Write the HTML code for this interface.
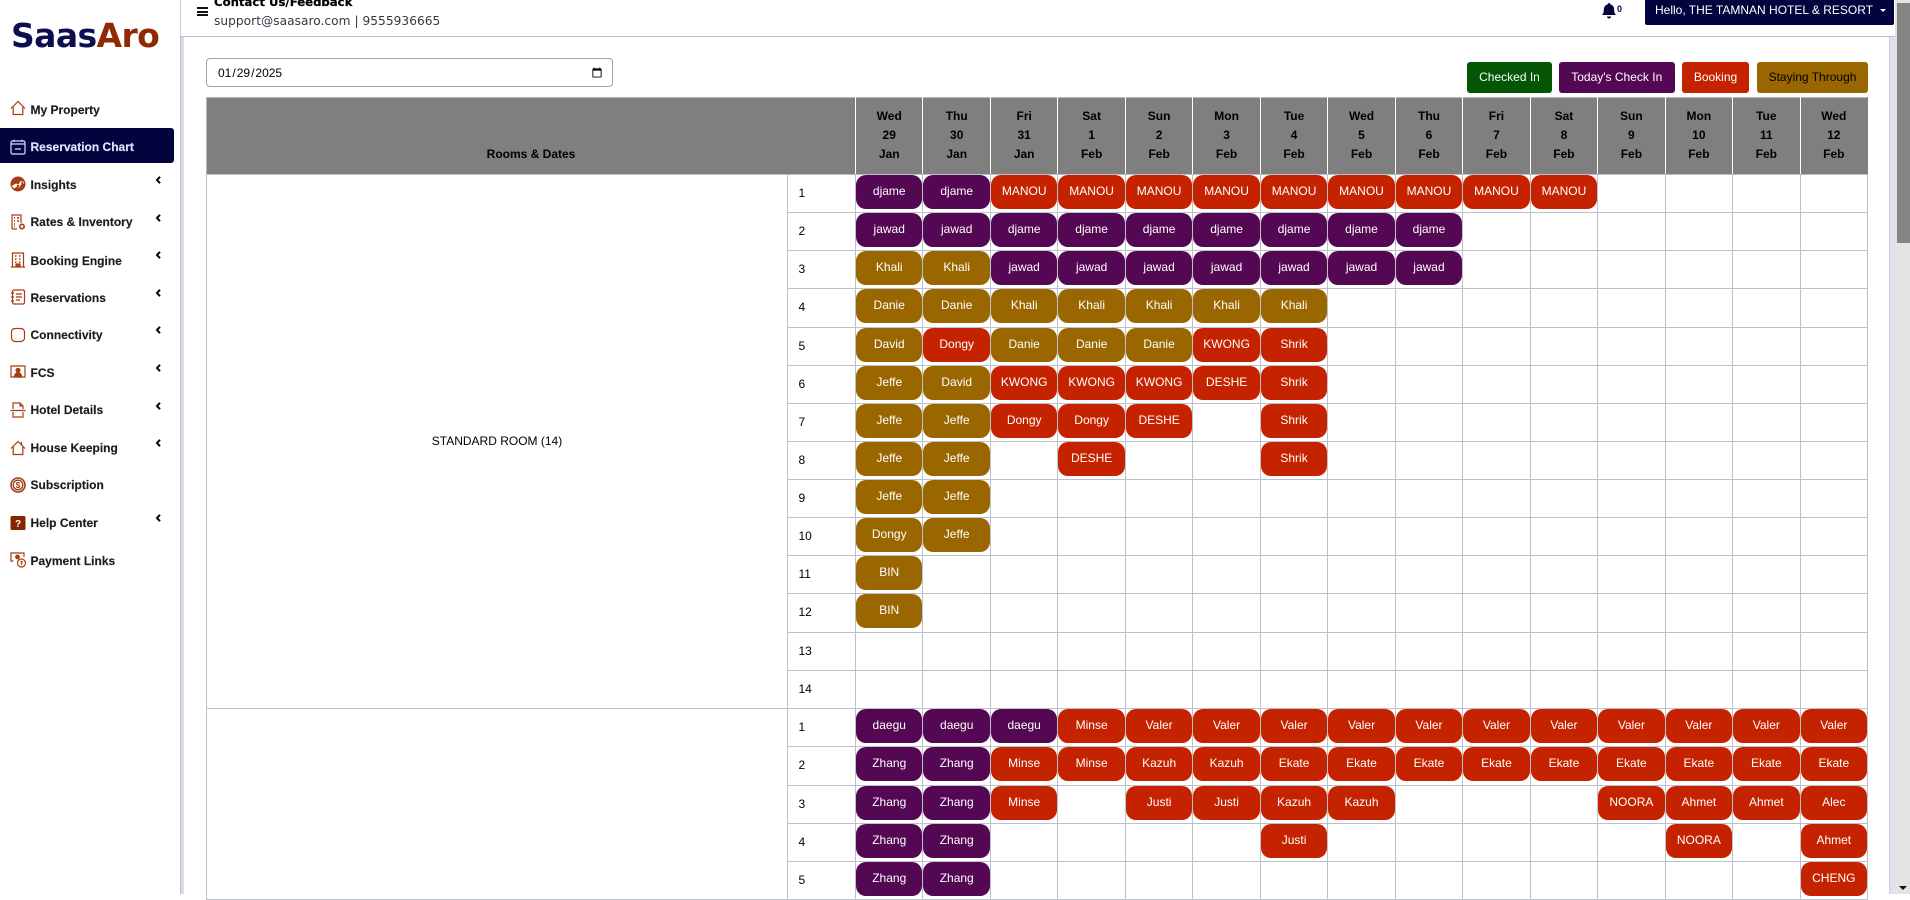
<!DOCTYPE html>
<html lang="en">
<head>
<meta charset="utf-8">
<title>Reservation Chart</title>
<style>
html,body{margin:0;padding:0;width:1910px;height:894px;overflow:hidden;background:#fff;font-family:"Liberation Sans",Arial,sans-serif;color:#000}
*{box-sizing:border-box}
.side{position:absolute;left:0;top:0;width:180px;height:894px;background:#fff}
.logo{position:absolute;left:11px;top:16px;font:bold 33px/40px "DejaVu Sans",sans-serif;letter-spacing:-.6px;color:#0b0f4f;white-space:nowrap}
.logo span{color:#8f2a02}
.active{position:absolute;left:0;top:128px;width:174px;height:35px;background:#03043d;border-radius:0 3px 3px 0}
.it{position:absolute;left:30.5px;font-weight:bold;font-size:12px;line-height:16px;color:#1c1c1c;white-space:nowrap;-webkit-text-stroke:.15px currentColor}
.ic{position:absolute;left:10px;width:16px;height:16px;fill:none;stroke:#a63c12;stroke-width:1.2}
.ch{position:absolute;left:155px;width:7px;height:8px;fill:none;stroke:#000;stroke-width:2}
.strip{position:absolute;left:180px;top:36px;width:4px;height:858px;background:#d7dce9;border-left:1px solid #b9bdc7}
.strip2{position:absolute;left:1889px;top:36px;width:6px;height:858px;background:#dfe3ee;border-left:1px solid #ccd1dd}
.top{position:absolute;left:180px;top:0;width:1715px;height:37px;background:#fff;border-bottom:1px solid #b9c0cb;border-left:1px solid #c9ccd3}
.card{position:absolute;left:184px;top:37px;width:1705px;height:857px;background:#fff;border-top-left-radius:5px;border-top-right-radius:5px}
.bars{position:absolute;left:197px;top:7px;width:11px;height:9px;border-top:2px solid #111;border-bottom:2px solid #111}
.bars:after{content:"";position:absolute;left:0;right:0;top:1.5px;height:2px;background:#111}
.c1{position:absolute;left:214px;top:-6px;font:bold 11.7px/16px "DejaVu Sans",sans-serif;color:#000;white-space:nowrap;-webkit-text-stroke:.2px #000}
.c2{position:absolute;left:214px;top:13px;font:12.2px/16px "DejaVu Sans",sans-serif;letter-spacing:.03px;color:#333a44;white-space:nowrap}
.hello{position:absolute;left:1645px;top:0;width:249px;height:25px;background:#03043d;color:#fff;font-size:12px;line-height:21px;padding-left:10px;border-radius:0 0 2px 2px;white-space:nowrap}
.hello:after{content:"";position:absolute;left:234.500px;top:9px;border:3px solid transparent;border-top-color:#fff;border-bottom:0}
.zero{position:absolute;left:1617px;top:3px;font:bold 9px/12px "Liberation Sans",sans-serif;color:#03043d}
.date{position:absolute;left:206px;top:58px;width:407px;height:29px;border:1px solid #9aa3b2;border-radius:4px;background:#fff;font:12px "Liberation Sans",Arial,sans-serif;padding:0 7px 0 10px;color:#000}
.b{position:absolute;top:62px;height:31px;border-radius:3px;font-size:12px;line-height:31px;text-align:center;color:#fff;white-space:nowrap}
table{position:absolute;left:206px;top:97px;width:1661.5px;border-collapse:collapse;table-layout:fixed;font-size:12px}
th{background:#7f7f7f;color:#000;font-weight:bold;font-size:12px;line-height:19px;padding:8px 0 10px;border:1px solid #fff;border-top:1px solid #b3b6bc;border-bottom:1px solid #b9c0cb;vertical-align:bottom;text-align:center}
th.rd{border-left:1px solid #b3b6bc}
th:last-child{border-right:1px solid #7f7f7f}
td{border:1px solid #bcc2cc;padding:0;height:38.14px;vertical-align:top;text-align:center;line-height:15px}
td.n{vertical-align:middle;text-align:left;padding-left:10.500px}
td.g{vertical-align:middle}
i{display:block;font-style:normal;height:34px;line-height:33px;border-radius:10px;color:#fff;margin:0;text-align:center}
.p{background:#540752}
.r{background:#c52200}
.g2{background:#9a6600}
.sb{position:absolute;left:1895px;top:0;width:15px;height:894px;background:#e3e3e3}
.th{position:absolute;left:2px;top:3px;width:13px;height:240px;background:#858585}
.ar{position:absolute;left:4px;top:886px;border:4px solid transparent;border-top:4px solid #111;border-bottom:0}
</style>
</head>
<body>
<div class="side">
<div class="logo">Saas<span>Aro</span></div>
<div class="active"></div>

<svg class="ic" style="top:100px" viewBox="0 0 16 16"><path d="M1 8.500 8 1.500l7 7M3.200 7v7.500h9.600V7"/></svg>
<div class="it" style="top:102px">My Property</div>

<svg class="ic" style="top:139px;stroke:#cfe0ff" viewBox="0 0 16 16"><rect x="1" y="2" width="14" height="13" rx="1.500"/><path d="M1 5h14M5 10h6M4 .8v2M12 .8v2"/></svg>
<div class="it" style="top:139px;color:#dce8ff">Reservation Chart</div>

<svg class="ic" style="top:176px;stroke:none;fill:#a63c12" viewBox="0 0 16 16"><circle cx="8" cy="8" r="7.500"/><path d="M1.500 10c2-.5 3-2.500 5-2.500l2 1 2-3.500 3.500 1-.5 1.500-2.500 1-1.500 3-3-.5-2.500 1.500z" fill="#fff"/><circle cx="8" cy="10" r="1.300"/><circle cx="12" cy="7" r="1"/></svg>
<div class="it" style="top:177px">Insights</div>

<svg class="ic" style="top:214px" viewBox="0 0 16 16"><path d="M2 15V1h9v8M2 15h5"/><path d="M4 4h1M7 4h2M4 7h1M7 7h2M4 10h1M4 12.500h1" stroke-width="1.500"/><circle cx="12" cy="12.500" r="2.200" stroke-width="1.600"/></svg>
<div class="it" style="top:214px">Rates &amp; Inventory</div>

<svg class="ic" style="top:252px" viewBox="0 0 16 16"><path d="M2.500 15V1h11v14zM.8 15h14.400"/><path d="M5 4h1.500M9 4h1.500M5 7h1.500M9 7h1.500M5 10h1.500M9 10h1.500" stroke-width="1.600"/><path d="M6 15v-3h4v3" fill="#a63c12"/></svg>
<div class="it" style="top:253px">Booking Engine</div>

<svg class="ic" style="top:289px" viewBox="0 0 16 16"><rect x="2.500" y="1" width="12" height="14" rx="1.500"/><path d="M6 5h6M6 8h6M6 11h4M1 4h3M1 8h3M1 12h3" stroke-width="1.300"/></svg>
<div class="it" style="top:290px">Reservations</div>

<svg class="ic" style="top:327px" viewBox="0 0 16 16"><rect x="1.500" y="1.500" width="13" height="13" rx="3.500"/></svg>
<div class="it" style="top:327px">Connectivity</div>

<svg class="ic" style="top:364px" viewBox="0 0 16 16"><path d="M1 2h14v11H1z"/><circle cx="8" cy="6.300" r="2" fill="#a63c12"/><path d="M4.500 13c0-3 1.500-4 3.500-4s3.500 1 3.500 4z" fill="#a63c12"/></svg>
<div class="it" style="top:365px">FCS</div>

<svg class="ic" style="top:402px" viewBox="0 0 16 16"><path d="M3 7V1h7l3 3v3M10 1v3h3M.5 8.500h15M3 10v5h10v-5"/></svg>
<div class="it" style="top:402px">Hotel Details</div>

<svg class="ic" style="top:440px" viewBox="0 0 16 16"><path d="M1 8.500 8 1.500l7 7M3.200 7v7.500h9.600V7M11.500 2v3"/></svg>
<div class="it" style="top:440px">House Keeping</div>

<svg class="ic" style="top:477px" viewBox="0 0 16 16"><circle cx="8" cy="8" r="7" stroke-width="1.600"/><circle cx="8" cy="8" r="4.800" stroke-width="1.300"/><text x="8" y="10.800" text-anchor="middle" font-size="8" font-weight="bold" fill="#a63c12" stroke="none" font-family="Liberation Sans">$</text></svg>
<div class="it" style="top:477px">Subscription</div>

<svg class="ic" style="top:515px;stroke:none" viewBox="0 0 16 16"><rect x=".5" y="1" width="15" height="14" rx="1.500" fill="#8a2400"/><text x="8" y="11.800" text-anchor="middle" font-size="10" font-weight="bold" fill="#fff" font-family="Liberation Sans">?</text></svg>
<div class="it" style="top:515px">Help Center</div>

<svg class="ic" style="top:552px" viewBox="0 0 16 16"><path d="M3.500 9H1V1h13v4"/><circle cx="7.500" cy="5" r="1.800" fill="#a63c12"/><circle cx="11.500" cy="11" r="4" stroke-width="1.200"/><path d="M10.500 9.500h2M10.500 11h2M11 12.500l1 0"/></svg>
<div class="it" style="top:553px">Payment Links</div>

<svg class="ch" style="top:176px" viewBox="0 0 7 8"><path d="M5 .8 2 4l3 3.200"/></svg>
<svg class="ch" style="top:214px" viewBox="0 0 7 8"><path d="M5 .8 2 4l3 3.200"/></svg>
<svg class="ch" style="top:251px" viewBox="0 0 7 8"><path d="M5 .8 2 4l3 3.200"/></svg>
<svg class="ch" style="top:289px" viewBox="0 0 7 8"><path d="M5 .8 2 4l3 3.200"/></svg>
<svg class="ch" style="top:326px" viewBox="0 0 7 8"><path d="M5 .8 2 4l3 3.200"/></svg>
<svg class="ch" style="top:364px" viewBox="0 0 7 8"><path d="M5 .8 2 4l3 3.200"/></svg>
<svg class="ch" style="top:402px" viewBox="0 0 7 8"><path d="M5 .8 2 4l3 3.200"/></svg>
<svg class="ch" style="top:439px" viewBox="0 0 7 8"><path d="M5 .8 2 4l3 3.200"/></svg>
<svg class="ch" style="top:514px" viewBox="0 0 7 8"><path d="M5 .8 2 4l3 3.200"/></svg>
</div>

<div class="strip"></div>
<div class="strip2"></div>
<div class="card"></div>

<div class="top"></div>
<div class="bars"></div>
<div class="c1">Contact Us/Feedback</div>
<div class="c2">support@saasaro.com | 9555936665</div>
<svg style="position:absolute;left:1601px;top:2px;width:16px;height:18px" viewBox="0 0 16 18"><path d="M8 1c.8 0 1.200.5 1.200 1.200C12 3 13.200 5 13.200 8c0 2.500.7 3.800 1.800 5H1c1.100-1.200 1.800-2.500 1.800-5 0-3 1.200-5 4-5.800C6.800 1.500 7.200 1 8 1zM6 14.500h4c0 1.300-.9 2-2 2s-2-.7-2-2z" fill="#03043d"/></svg>
<div class="zero">0</div>
<div class="hello">Hello, THE TAMNAN HOTEL &amp; RESORT</div>

<input class="date" type="date" value="2025-01-29">

<div class="b" style="left:1467px;width:85px;background:#045504">Checked In</div>
<div class="b" style="left:1559px;width:115.500px;background:#540752">Today's Check In</div>
<div class="b" style="left:1682px;width:67px;background:#c52200">Booking</div>
<div class="b" style="left:1757px;width:111px;background:#9a6600;color:#000">Staying Through</div>

<table>
<colgroup><col style="width:581px"><col style="width:68px"><col span="15" style="width:67.47px"></colgroup>
<thead><tr style="height:77px">
<th colspan="2" class="rd">Rooms &amp; Dates</th>
<th>Wed<br>29<br>Jan</th><th>Thu<br>30<br>Jan</th><th>Fri<br>31<br>Jan</th><th>Sat<br>1<br>Feb</th><th>Sun<br>2<br>Feb</th><th>Mon<br>3<br>Feb</th><th>Tue<br>4<br>Feb</th><th>Wed<br>5<br>Feb</th><th>Thu<br>6<br>Feb</th><th>Fri<br>7<br>Feb</th><th>Sat<br>8<br>Feb</th><th>Sun<br>9<br>Feb</th><th>Mon<br>10<br>Feb</th><th>Tue<br>11<br>Feb</th><th>Wed<br>12<br>Feb</th>
</tr></thead>
<tbody>
<tr><td class="g" rowspan="14">STANDARD ROOM (14)</td><td class="n">1</td><td><i class="p">djame</i></td><td><i class="p">djame</i></td><td><i class="r">MANOU</i></td><td><i class="r">MANOU</i></td><td><i class="r">MANOU</i></td><td><i class="r">MANOU</i></td><td><i class="r">MANOU</i></td><td><i class="r">MANOU</i></td><td><i class="r">MANOU</i></td><td><i class="r">MANOU</i></td><td><i class="r">MANOU</i></td><td></td><td></td><td></td><td></td></tr>
<tr><td class="n">2</td><td><i class="p">jawad</i></td><td><i class="p">jawad</i></td><td><i class="p">djame</i></td><td><i class="p">djame</i></td><td><i class="p">djame</i></td><td><i class="p">djame</i></td><td><i class="p">djame</i></td><td><i class="p">djame</i></td><td><i class="p">djame</i></td><td></td><td></td><td></td><td></td><td></td><td></td></tr>
<tr><td class="n">3</td><td><i class="g2">Khali</i></td><td><i class="g2">Khali</i></td><td><i class="p">jawad</i></td><td><i class="p">jawad</i></td><td><i class="p">jawad</i></td><td><i class="p">jawad</i></td><td><i class="p">jawad</i></td><td><i class="p">jawad</i></td><td><i class="p">jawad</i></td><td></td><td></td><td></td><td></td><td></td><td></td></tr>
<tr><td class="n">4</td><td><i class="g2">Danie</i></td><td><i class="g2">Danie</i></td><td><i class="g2">Khali</i></td><td><i class="g2">Khali</i></td><td><i class="g2">Khali</i></td><td><i class="g2">Khali</i></td><td><i class="g2">Khali</i></td><td></td><td></td><td></td><td></td><td></td><td></td><td></td><td></td></tr>
<tr><td class="n">5</td><td><i class="g2">David</i></td><td><i class="r">Dongy</i></td><td><i class="g2">Danie</i></td><td><i class="g2">Danie</i></td><td><i class="g2">Danie</i></td><td><i class="r">KWONG</i></td><td><i class="r">Shrik</i></td><td></td><td></td><td></td><td></td><td></td><td></td><td></td><td></td></tr>
<tr><td class="n">6</td><td><i class="g2">Jeffe</i></td><td><i class="g2">David</i></td><td><i class="r">KWONG</i></td><td><i class="r">KWONG</i></td><td><i class="r">KWONG</i></td><td><i class="r">DESHE</i></td><td><i class="r">Shrik</i></td><td></td><td></td><td></td><td></td><td></td><td></td><td></td><td></td></tr>
<tr><td class="n">7</td><td><i class="g2">Jeffe</i></td><td><i class="g2">Jeffe</i></td><td><i class="r">Dongy</i></td><td><i class="r">Dongy</i></td><td><i class="r">DESHE</i></td><td></td><td><i class="r">Shrik</i></td><td></td><td></td><td></td><td></td><td></td><td></td><td></td><td></td></tr>
<tr><td class="n">8</td><td><i class="g2">Jeffe</i></td><td><i class="g2">Jeffe</i></td><td></td><td><i class="r">DESHE</i></td><td></td><td></td><td><i class="r">Shrik</i></td><td></td><td></td><td></td><td></td><td></td><td></td><td></td><td></td></tr>
<tr><td class="n">9</td><td><i class="g2">Jeffe</i></td><td><i class="g2">Jeffe</i></td><td></td><td></td><td></td><td></td><td></td><td></td><td></td><td></td><td></td><td></td><td></td><td></td><td></td></tr>
<tr><td class="n">10</td><td><i class="g2">Dongy</i></td><td><i class="g2">Jeffe</i></td><td></td><td></td><td></td><td></td><td></td><td></td><td></td><td></td><td></td><td></td><td></td><td></td><td></td></tr>
<tr><td class="n">11</td><td><i class="g2">BIN</i></td><td></td><td></td><td></td><td></td><td></td><td></td><td></td><td></td><td></td><td></td><td></td><td></td><td></td><td></td></tr>
<tr><td class="n">12</td><td><i class="g2">BIN</i></td><td></td><td></td><td></td><td></td><td></td><td></td><td></td><td></td><td></td><td></td><td></td><td></td><td></td><td></td></tr>
<tr><td class="n">13</td><td></td><td></td><td></td><td></td><td></td><td></td><td></td><td></td><td></td><td></td><td></td><td></td><td></td><td></td><td></td></tr>
<tr><td class="n">14</td><td></td><td></td><td></td><td></td><td></td><td></td><td></td><td></td><td></td><td></td><td></td><td></td><td></td><td></td><td></td></tr>
<tr><td class="g" rowspan="5"></td><td class="n">1</td><td><i class="p">daegu</i></td><td><i class="p">daegu</i></td><td><i class="p">daegu</i></td><td><i class="r">Minse</i></td><td><i class="r">Valer</i></td><td><i class="r">Valer</i></td><td><i class="r">Valer</i></td><td><i class="r">Valer</i></td><td><i class="r">Valer</i></td><td><i class="r">Valer</i></td><td><i class="r">Valer</i></td><td><i class="r">Valer</i></td><td><i class="r">Valer</i></td><td><i class="r">Valer</i></td><td><i class="r">Valer</i></td></tr>
<tr style="height:39px"><td class="n">2</td><td><i class="p">Zhang</i></td><td><i class="p">Zhang</i></td><td><i class="r">Minse</i></td><td><i class="r">Minse</i></td><td><i class="r">Kazuh</i></td><td><i class="r">Kazuh</i></td><td><i class="r">Ekate</i></td><td><i class="r">Ekate</i></td><td><i class="r">Ekate</i></td><td><i class="r">Ekate</i></td><td><i class="r">Ekate</i></td><td><i class="r">Ekate</i></td><td><i class="r">Ekate</i></td><td><i class="r">Ekate</i></td><td><i class="r">Ekate</i></td></tr>
<tr><td class="n">3</td><td><i class="p">Zhang</i></td><td><i class="p">Zhang</i></td><td><i class="r">Minse</i></td><td></td><td><i class="r">Justi</i></td><td><i class="r">Justi</i></td><td><i class="r">Kazuh</i></td><td><i class="r">Kazuh</i></td><td></td><td></td><td></td><td><i class="r">NOORA</i></td><td><i class="r">Ahmet</i></td><td><i class="r">Ahmet</i></td><td><i class="r">Alec</i></td></tr>
<tr><td class="n">4</td><td><i class="p">Zhang</i></td><td><i class="p">Zhang</i></td><td></td><td></td><td></td><td></td><td><i class="r">Justi</i></td><td></td><td></td><td></td><td></td><td></td><td><i class="r">NOORA</i></td><td></td><td><i class="r">Ahmet</i></td></tr>
<tr><td class="n">5</td><td><i class="p">Zhang</i></td><td><i class="p">Zhang</i></td><td></td><td></td><td></td><td></td><td></td><td></td><td></td><td></td><td></td><td></td><td></td><td></td><td><i class="r">CHENG</i></td></tr>
</tbody>
</table>

<div class="sb"><div class="th"></div><div class="ar"></div></div>
</body>
</html>
